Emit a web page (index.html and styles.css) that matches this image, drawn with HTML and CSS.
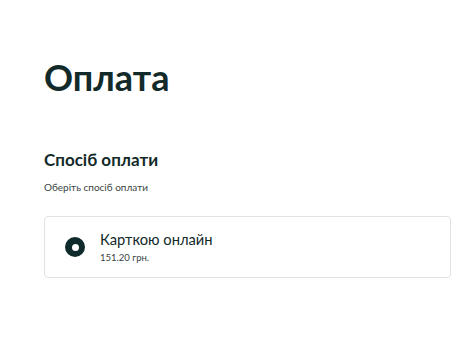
FILE: index.html
```html
<!DOCTYPE html>
<html lang="uk">
<head>
<meta charset="utf-8">
<link rel="stylesheet" href="styles.css">
</head>
<body>
<main class="page">
  <h1 class="title">Оплата</h1>
  <section class="method">
    <h2 class="method-title">Спосіб оплати</h2>
    <p class="method-hint">Оберіть спосіб оплати</p>
    <label class="option">
      <span class="radio"><span class="radio-dot"></span></span>
      <span class="option-text">
        <span class="option-name">Карткою онлайн</span>
        <span class="option-price">151.20 грн.</span>
      </span>
    </label>
  </section>
</main>
</body>
</html>
```

FILE: styles.css
```css
html, body {
  margin: 0;
  padding: 0;
  background: #fff;
}
body {
  font-family: Lato, "Noto Sans", sans-serif;
  color: #132a2a;
}
.page {
  padding: 53px 23px 0 44px;
}
.title {
  margin: 0;
  font-size: 36px;
  font-weight: 700;
  line-height: 48px;
  letter-spacing: 0;
}
.method {
  margin-top: 48px;
}
.method-title {
  margin: 0;
  font-size: 17px;
  font-weight: 700;
  line-height: 22px;
}
.method-hint {
  margin: 9px 0 0;
  font-size: 10px;
  line-height: 14px;
  color: #3a4444;
}
.option {
  margin-top: 22px;
  display: flex;
  align-items: center;
  gap: 15px;
  height: 62px;
  padding: 0 20px;
  border: 1px solid #e2e2e2;
  border-radius: 4px;
  box-sizing: border-box;
}
.radio {
  width: 20px;
  height: 20px;
  border-radius: 50%;
  background: #0f2a2b;
  display: flex;
  align-items: center;
  justify-content: center;
  flex: none;
}
.radio-dot {
  width: 7px;
  height: 7px;
  border-radius: 50%;
  background: #fff;
}
.option-text {
  display: flex;
  flex-direction: column;
  gap: 4px;
}
.option-name {
  font-size: 14.7px;
  font-weight: 400;
  line-height: 18px;
}
.option-price {
  font-size: 9.5px;
  line-height: 12px;
  color: #3a4444;
}
```
